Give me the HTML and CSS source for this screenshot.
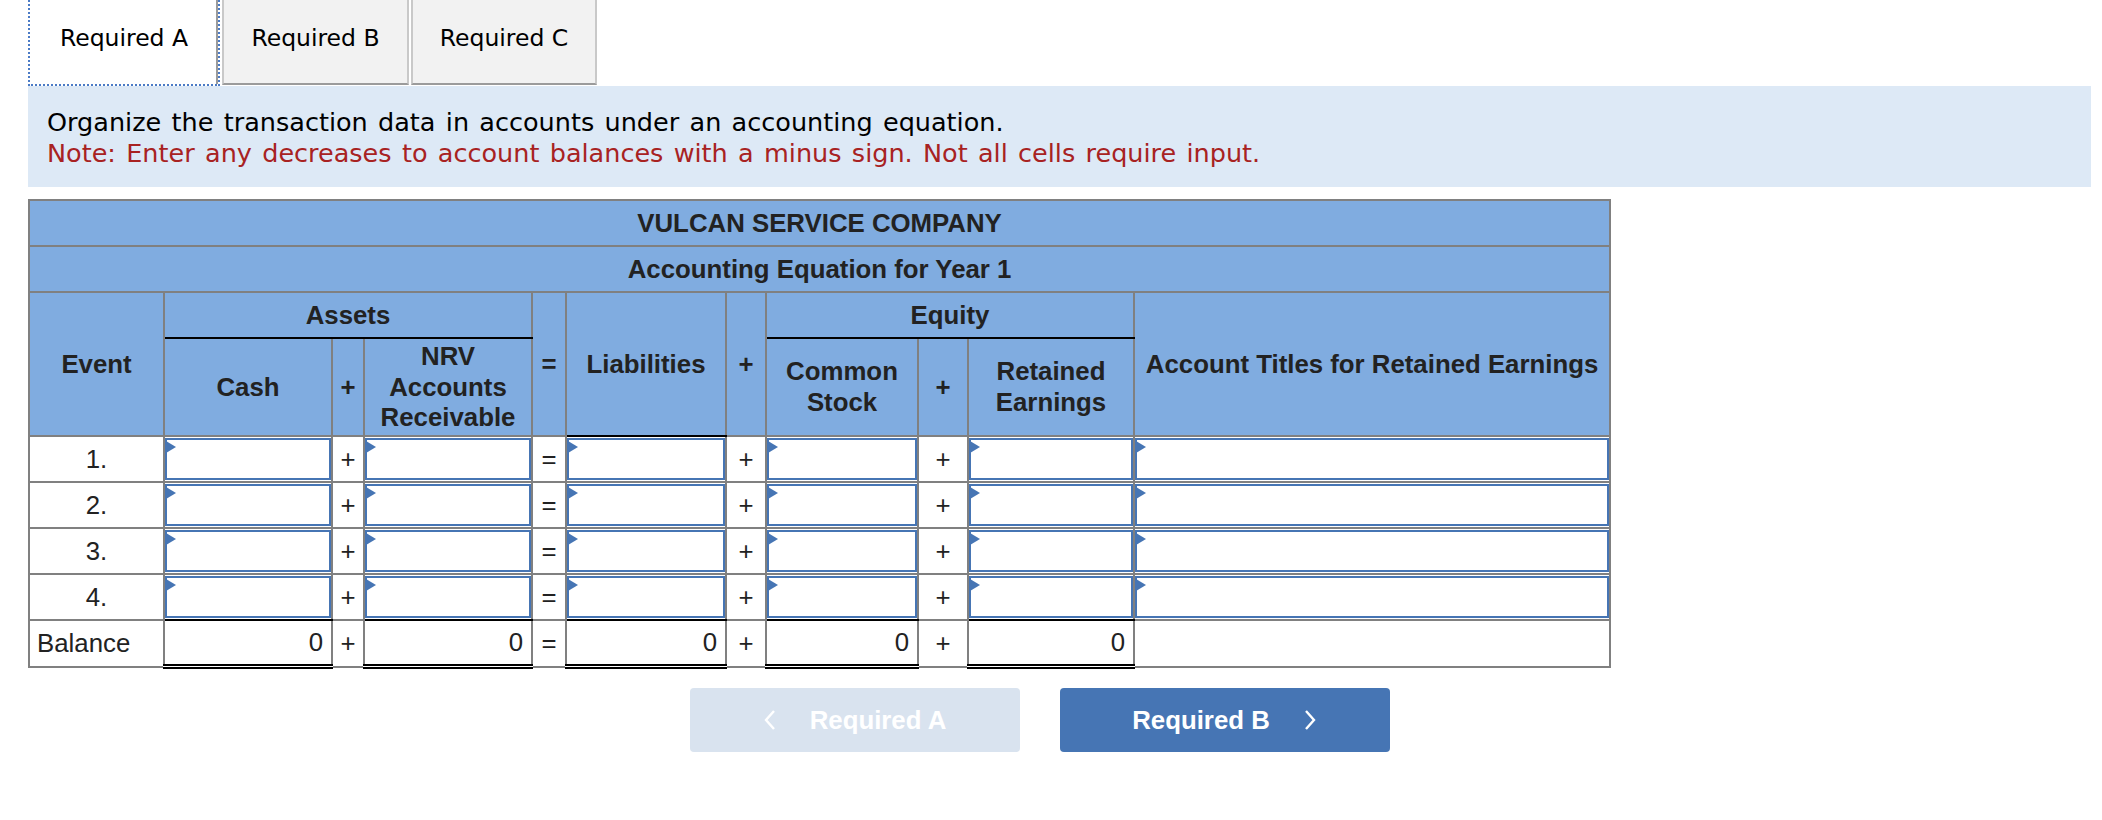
FILE: index.html
```html
<!DOCTYPE html>
<html lang="en">
<head>
<meta charset="utf-8">
<title>Accounting Equation</title>
<link rel="stylesheet" href="styles.css">
</head>
<body>
<div class="page">
  <div class="tabs">
    <div class="tab tab-a">Required A</div>
    <div class="tab tab-b">Required B</div>
    <div class="tab tab-c">Required C</div>
  </div>
  <div class="instr">
    <div>Organize the transaction data in accounts under an accounting equation.</div>
    <div class="note">Note: Enter any decreases to account balances with a minus sign. Not all cells require input.</div>
  </div>
  <table class="eq">
    <colgroup>
      <col class="c-ev"><col class="c-cash"><col class="c-op1"><col class="c-nrv"><col class="c-op2"><col class="c-liab"><col class="c-op3"><col class="c-cs"><col class="c-op4"><col class="c-re"><col class="c-at">
    </colgroup>
    <thead>
      <tr class="title"><th colspan="11">VULCAN SERVICE COMPANY</th></tr>
      <tr class="title"><th colspan="11">Accounting Equation for Year 1</th></tr>
      <tr class="group">
        <th rowspan="2">Event</th>
        <th colspan="3" class="grp">Assets</th>
        <th rowspan="2" class="op">=</th>
        <th rowspan="2" class="liab">Liabilities</th>
        <th rowspan="2" class="op">+</th>
        <th colspan="3" class="grp">Equity</th>
        <th rowspan="2" class="acct">Account Titles for Retained Earnings</th>
      </tr>
      <tr class="sub">
        <th>Cash</th>
        <th class="op">+</th>
        <th>NRV<br>Accounts<br>Receivable</th>
        <th>Common<br>Stock</th>
        <th class="op">+</th>
        <th>Retained<br>Earnings</th>
      </tr>
    </thead>
    <tbody>
      <tr>
        <td class="ev">1.</td>
        <td class="in"><div class="field"><input type="text"></div></td>
        <td class="op">+</td>
        <td class="in"><div class="field"><input type="text"></div></td>
        <td class="op">=</td>
        <td class="in"><div class="field"><input type="text"></div></td>
        <td class="op">+</td>
        <td class="in"><div class="field"><input type="text"></div></td>
        <td class="op">+</td>
        <td class="in"><div class="field"><input type="text"></div></td>
        <td class="in at"><div class="field"><input type="text"></div></td>
      </tr>
      <tr>
        <td class="ev">2.</td>
        <td class="in"><div class="field"><input type="text"></div></td>
        <td class="op">+</td>
        <td class="in"><div class="field"><input type="text"></div></td>
        <td class="op">=</td>
        <td class="in"><div class="field"><input type="text"></div></td>
        <td class="op">+</td>
        <td class="in"><div class="field"><input type="text"></div></td>
        <td class="op">+</td>
        <td class="in"><div class="field"><input type="text"></div></td>
        <td class="in at"><div class="field"><input type="text"></div></td>
      </tr>
      <tr>
        <td class="ev">3.</td>
        <td class="in"><div class="field"><input type="text"></div></td>
        <td class="op">+</td>
        <td class="in"><div class="field"><input type="text"></div></td>
        <td class="op">=</td>
        <td class="in"><div class="field"><input type="text"></div></td>
        <td class="op">+</td>
        <td class="in"><div class="field"><input type="text"></div></td>
        <td class="op">+</td>
        <td class="in"><div class="field"><input type="text"></div></td>
        <td class="in at"><div class="field"><input type="text"></div></td>
      </tr>
      <tr class="last">
        <td class="ev">4.</td>
        <td class="in"><div class="field"><input type="text"></div></td>
        <td class="op">+</td>
        <td class="in"><div class="field"><input type="text"></div></td>
        <td class="op">=</td>
        <td class="in"><div class="field"><input type="text"></div></td>
        <td class="op">+</td>
        <td class="in"><div class="field"><input type="text"></div></td>
        <td class="op">+</td>
        <td class="in"><div class="field"><input type="text"></div></td>
        <td class="in at"><div class="field"><input type="text"></div></td>
      </tr>
      <tr class="bal">
        <td class="bl">Balance</td>
        <td class="num">0</td>
        <td class="op">+</td>
        <td class="num">0</td>
        <td class="op">=</td>
        <td class="num">0</td>
        <td class="op">+</td>
        <td class="num">0</td>
        <td class="op">+</td>
        <td class="num">0</td>
        <td class="blank"></td>
      </tr>
    </tbody>
  </table>
  <div class="nav">
    <button type="button" class="btn prev">
      <svg class="chev" width="14" height="22" viewBox="0 0 14 22"><polyline points="11,2 3,11 11,20" fill="none" stroke="#fff" stroke-width="2.4"/></svg>
      <span>Required A</span>
    </button>
    <button type="button" class="btn next">
      <span>Required B</span>
      <svg class="chev" width="14" height="22" viewBox="0 0 14 22"><polyline points="3,2 11,11 3,20" fill="none" stroke="#fff" stroke-width="2.4"/></svg>
    </button>
  </div>
</div>
</body>
</html>
```
FILE: styles.css
```css
html, body {
  margin: 0;
  padding: 0;
  background: #ffffff;
}

body {
  font-family: "Liberation Sans", Arial, sans-serif;
  color: #222222;
}

.page {
  padding-left: 28px;
}

/* Tabs */
.tabs {
  display: flex;
  align-items: flex-start;
  height: 86px;
  font-family: "DejaVu Sans", Verdana, sans-serif;
  font-size: 23.5px;
  color: #000000;
}

.tab {
  box-sizing: border-box;
  height: 85px;
  display: flex;
  align-items: center;
  justify-content: center;
  padding-bottom: 8px;
  background: #f2f2f2;
  border: 2px solid #c9c9c9;
  border-top: none;
  border-bottom-color: #9b9b9b;
}

.tab-a {
  width: 192px;
  height: 86px;
  background: #ffffff;
  border: 2px dotted #4b7bc6;
  border-top: none;
  box-shadow: inset -2px 0 0 #9b9b9b;
}

.tab-b {
  width: 187px;
  margin-left: 2px;
}

.tab-c {
  width: 186px;
  margin-left: 2px;
}

/* Instructions */
.instr {
  box-sizing: border-box;
  width: 2063px;
  background: #dde9f6;
  padding: 21px 19px 18px;
  font-family: "DejaVu Sans", Verdana, sans-serif;
  font-size: 25.5px;
  word-spacing: 2.2px;
  line-height: 31px;
  color: #000000;
}

.instr .note {
  color: #a82222;
}

/* Table */
.eq {
  margin-top: 12px;
  border-collapse: collapse;
  table-layout: fixed;
  width: 1583px;
  border: 2px solid #808080;
}

.c-ev { width: 135px; }
.c-cash { width: 168px; }
.c-op1 { width: 32px; }
.c-nrv { width: 168px; }
.c-op2 { width: 34px; }
.c-liab { width: 160px; }
.c-op3 { width: 40px; }
.c-cs { width: 152px; }
.c-op4 { width: 50px; }
.c-re { width: 166px; }
.c-at { width: 476px; }

.eq th,
.eq td {
  border: 2px solid #808080;
  padding: 0;
  font-size: 25.8px;
  color: #222222;
}

.eq th {
  background: #80ace0;
  font-weight: bold;
  line-height: 1.19;
  text-align: center;
  vertical-align: middle;
  white-space: nowrap;
}

.title th {
  line-height: 44px;
}

.group .grp {
  line-height: 44px;
  border-bottom: 2px solid #000000;
}

.group .liab {
  border-bottom: 2px solid #000000;
}

.sub th {
  padding: 2px 0;
}

.eq td {
  background: #ffffff;
  line-height: 1.2;
  text-align: center;
  vertical-align: middle;
}

.eq td.in {
  padding: 1px 0;
}

.last td.in:not(.at) {
  border-bottom: 2px solid #000000;
}

.field {
  position: relative;
  height: 42px;
}

.field input {
  display: block;
  box-sizing: border-box;
  width: 100%;
  height: 42px;
  margin: 0;
  padding: 0 6px;
  border: 2px solid #4675b4;
  background: #ffffff;
  font-family: "Liberation Sans", Arial, sans-serif;
  font-size: 25.6px;
  outline: none;
}

.field::before {
  content: "";
  position: absolute;
  left: 1px;
  top: 3px;
  width: 0;
  height: 0;
  border-left: 10px solid #4675b4;
  border-top: 6px solid transparent;
  border-bottom: 6px solid transparent;
}

.bal td {
  line-height: 43px;
}

.bal td.bl {
  text-align: left;
  padding-left: 7px;
}

.bal td.num {
  text-align: right;
  padding-right: 8px;
  border-top: 2px solid #000000;
  border-bottom: 5px double #000000;
}

/* Navigation buttons */
.nav {
  display: flex;
  justify-content: center;
  gap: 40px;
  width: 2023px;
  margin-top: 19px;
}

.btn {
  box-sizing: border-box;
  width: 330px;
  height: 64px;
  border: none;
  border-radius: 4px;
  display: flex;
  align-items: center;
  justify-content: center;
  gap: 33px;
  padding: 0;
  color: #ffffff;
  font-family: "Liberation Sans", Arial, sans-serif;
  font-weight: bold;
  font-size: 25.8px;
}

.btn.prev {
  background: #d9e3ef;
}

.btn.next {
  background: #4675b4;
}

.chev {
  display: block;
}
```
